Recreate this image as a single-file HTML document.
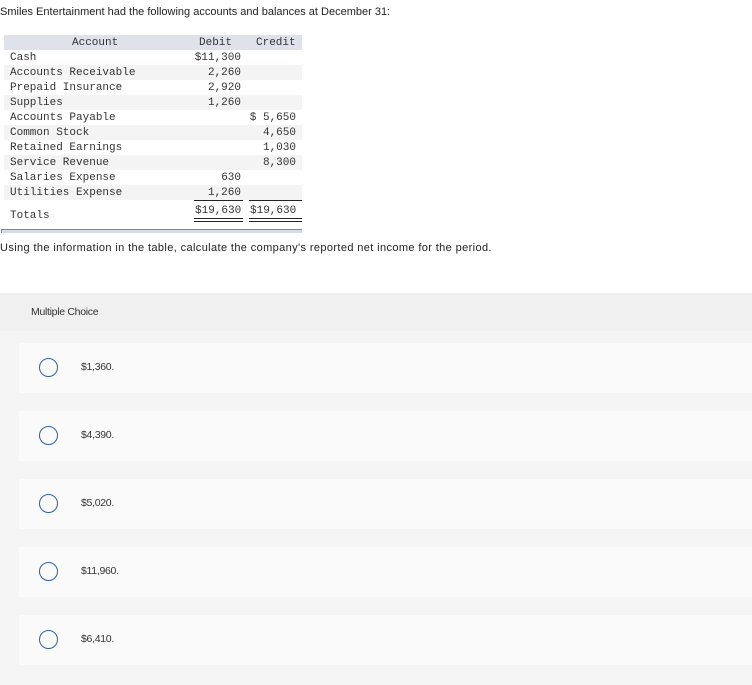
<!DOCTYPE html>
<html><head><meta charset="utf-8"><style>
body{margin:0;width:752px;height:685px;background:#fff;font-family:"Liberation Sans",sans-serif;position:relative;overflow:hidden;color:#222}
.t{position:absolute;font-size:11px;color:#222;white-space:nowrap}
.m{position:absolute;font-family:"Liberation Mono",monospace;font-size:11px;color:#333;white-space:pre;line-height:15px}
.row{position:absolute;left:4px;width:298px;height:15px}
.opt{position:absolute;left:19px;width:733px;height:50px;background:#fafafa}
.c{position:absolute;left:20px;top:15px;width:19px;height:19px;border:1.5px solid #2a5f9a;border-radius:50%;box-sizing:border-box}
.ol{position:absolute;left:62px;top:18px;font-size:10.5px;color:#333;letter-spacing:-0.3px}
</style></head><body>
<div class="t" style="left:0;top:6px">Smiles Entertainment had the following accounts and balances at December 31:</div>
<div class="row" style="top:35px;background:#dfe2ea"></div>
<div class="row" style="top:65px;background:#f4f4f4"></div>
<div class="row" style="top:95px;background:#f4f4f4"></div>
<div class="row" style="top:125px;background:#f4f4f4"></div>
<div class="row" style="top:155px;background:#f4f4f4"></div>
<div class="row" style="top:185px;background:#f4f4f4"></div>
<div class="m" style="left:72px;top:36px">Account</div>
<div class="m" style="left:199px;top:36px">Debit</div>
<div class="m" style="left:256px;top:36px">Credit</div>
<div class="m" style="left:10px;top:51px">Cash
Accounts Receivable
Prepaid Insurance
Supplies
Accounts Payable
Common Stock
Retained Earnings
Service Revenue
Salaries Expense
Utilities Expense</div>
<div class="m" style="left:10px;top:209px">Totals</div>
<div class="m" style="right:511px;top:51px;text-align:right">$11,300
2,260
2,920
1,260




630
1,260</div>
<div class="m" style="right:456px;top:111px;text-align:right">$ 5,650
4,650
1,030
8,300</div>
<div class="m" style="left:195px;top:204px">$19,630</div>
<div class="m" style="left:250px;top:204px">$19,630</div>
<div style="position:absolute;left:194px;top:200px;width:49px;height:1px;background:#222"></div>
<div style="position:absolute;left:249px;top:200px;width:53px;height:1px;background:#222"></div>
<div style="position:absolute;left:194px;top:218px;width:49px;height:4px;border-top:1px solid #222;border-bottom:1px solid #222;box-sizing:border-box"></div>
<div style="position:absolute;left:249px;top:218px;width:53px;height:4px;border-top:1px solid #222;border-bottom:1px solid #222;box-sizing:border-box"></div>
<div style="position:absolute;left:1px;top:229px;width:301px;height:4px;background:#d8dbe3;border-top:1px solid #888;border-left:1px solid #888;box-sizing:border-box"></div>
<div class="t" style="left:0;top:242px;letter-spacing:0.38px">Using the information in the table, calculate the company's reported net income for the period.</div>
<div style="position:absolute;left:0;top:293px;width:752px;height:38px;background:#f0f0f0"></div>
<div class="t" style="left:31px;top:306px;font-size:10.5px;color:#333;letter-spacing:-0.3px">Multiple Choice</div>
<div style="position:absolute;left:0;top:331px;width:752px;height:354px;background:#f5f5f5"></div>
<div class="opt" style="top:343px"><div class="c"></div><div class="ol">$1,360.</div></div>
<div class="opt" style="top:411px"><div class="c"></div><div class="ol">$4,390.</div></div>
<div class="opt" style="top:479px"><div class="c"></div><div class="ol">$5,020.</div></div>
<div class="opt" style="top:547px"><div class="c"></div><div class="ol">$11,960.</div></div>
<div class="opt" style="top:615px"><div class="c"></div><div class="ol">$6,410.</div></div>
</body></html>
